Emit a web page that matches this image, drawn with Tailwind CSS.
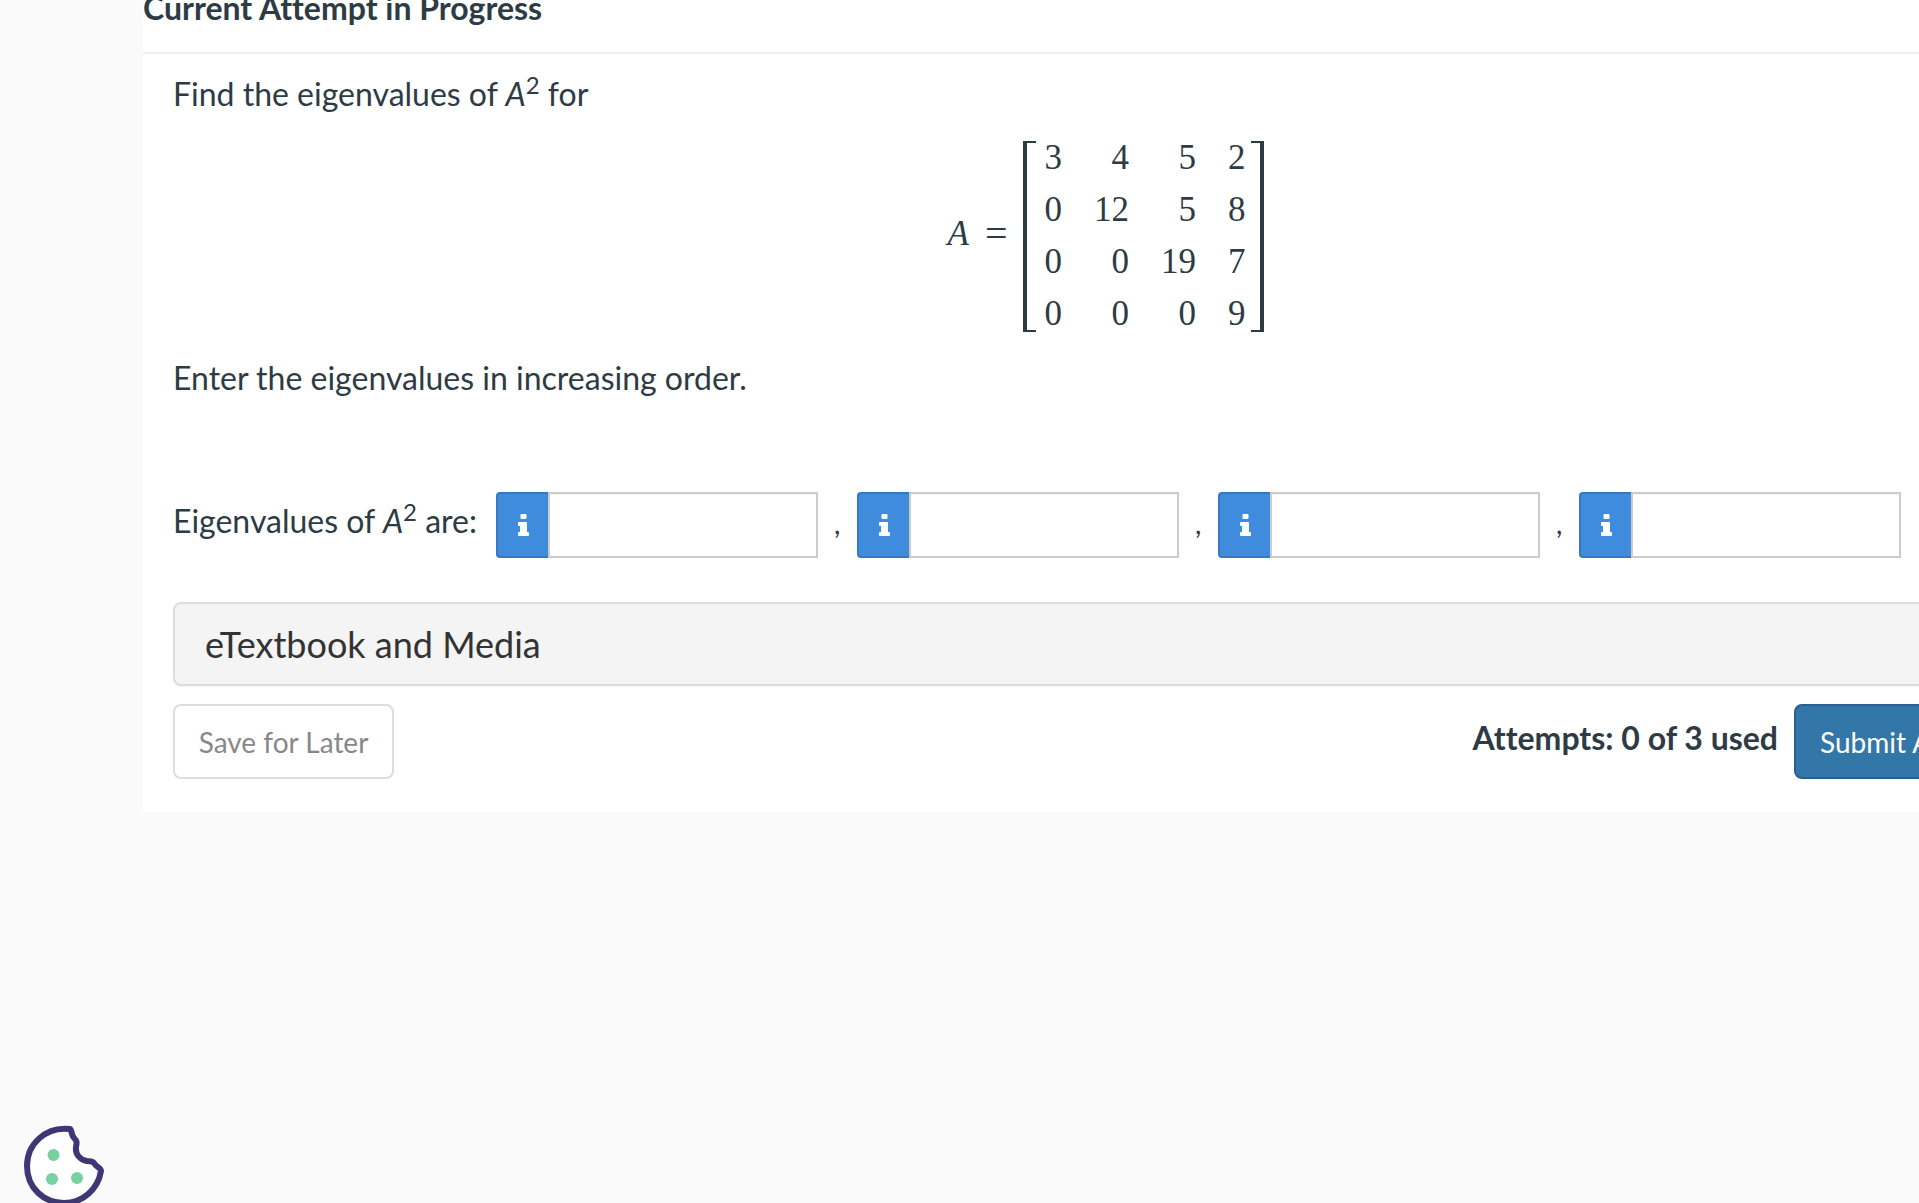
<!DOCTYPE html>
<html lang="en">
<head>
    <meta charset="UTF-8">
    <meta name="viewport" content="width=device-width, initial-scale=1.0">
    <title>Eigenvalues</title>
    <script src="https://cdn.jsdelivr.net/npm/@tailwindcss/browser@4"></script>
</head>
<body class="min-h-screen overflow-hidden bg-[#fafafa] font-['Lato',sans-serif] text-[32px] leading-10 text-[#2d3b45] [font-variant-ligatures:none]">

    <main class="ml-[143px] -mr-[150px] flow-root bg-white pb-[33px]">
        <h2 class="-mt-3 border-b-2 border-[#eeeeee] pb-6 font-bold">Current Attempt in Progress</h2>

        <form class="px-[30px] pt-5">
            <p>Find the eigenvalues of <i>A</i><sup>2</sup> for</p>

            <!-- matrix -->
            <div class="mt-[18px] flex items-center justify-center font-['Liberation_Serif',serif] text-[35px]">
                <i class="pb-1">A</i>
                <span class="ml-4 pb-1 text-[40px]">=</span>
                <div class="ml-4 h-[191px] w-[13px] border-y-2 border-l-4 border-[#2d3b45]"></div>
                <table class="ml-2 mr-1.5 text-right leading-[52px]">
                    <tr><td>3</td><td class="pl-8">4</td><td class="pl-8">5</td><td class="pl-8">2</td></tr>
                    <tr><td>0</td><td class="pl-8">12</td><td class="pl-8">5</td><td class="pl-8">8</td></tr>
                    <tr><td>0</td><td class="pl-8">0</td><td class="pl-8">19</td><td class="pl-8">7</td></tr>
                    <tr><td>0</td><td class="pl-8">0</td><td class="pl-8">0</td><td class="pl-8">9</td></tr>
                </table>
                <div class="h-[191px] w-[13px] border-y-2 border-r-4 border-[#2d3b45]"></div>
            </div>

            <p class="mt-[18px]">Enter the eigenvalues in increasing order.</p>

            <!-- answers -->
            <div class="mt-[94px] flex items-center">
                <label for="ev1" class="w-[323px] shrink-0 pb-2">Eigenvalues of <i>A</i><sup>2</sup> are:</label>
                <div class="flex h-[66px] w-[322px] shrink-0">
                    <button type="button" aria-label="Info" class="flex w-[52px] shrink-0 items-center justify-center rounded-l border-y-2 border-l-2 border-[#3379c4] bg-[#3f8bdc]">
                        <svg class="h-[22px] w-[11px]" viewBox="0 0 11 22" fill="#fff"><rect x="2.5" width="6" height="5" rx="1"/><path d="M1 8h7q1 0 1 1v9h1q1 0 1 1v2q0 1-1 1H1q-1 0-1-1v-2q0-1 1-1h1v-6H1q-1 0-1-1V9q0-1 1-1z"/></svg>
                    </button>
                    <input id="ev1" type="text" class="w-full min-w-0 border-2 border-[#cccccc] bg-white px-3 inset-shadow-xs">
                </div>
                <span class="w-[39px] shrink-0 pb-1 pl-4 text-[28px]">,</span>
                <div class="flex h-[66px] w-[322px] shrink-0">
                    <button type="button" aria-label="Info" class="flex w-[52px] shrink-0 items-center justify-center rounded-l border-y-2 border-l-2 border-[#3379c4] bg-[#3f8bdc]">
                        <svg class="h-[22px] w-[11px]" viewBox="0 0 11 22" fill="#fff"><rect x="2.5" width="6" height="5" rx="1"/><path d="M1 8h7q1 0 1 1v9h1q1 0 1 1v2q0 1-1 1H1q-1 0-1-1v-2q0-1 1-1h1v-6H1q-1 0-1-1V9q0-1 1-1z"/></svg>
                    </button>
                    <input id="ev2" aria-label="Second eigenvalue" type="text" class="w-full min-w-0 border-2 border-[#cccccc] bg-white px-3 inset-shadow-xs">
                </div>
                <span class="w-[39px] shrink-0 pb-1 pl-4 text-[28px]">,</span>
                <div class="flex h-[66px] w-[322px] shrink-0">
                    <button type="button" aria-label="Info" class="flex w-[52px] shrink-0 items-center justify-center rounded-l border-y-2 border-l-2 border-[#3379c4] bg-[#3f8bdc]">
                        <svg class="h-[22px] w-[11px]" viewBox="0 0 11 22" fill="#fff"><rect x="2.5" width="6" height="5" rx="1"/><path d="M1 8h7q1 0 1 1v9h1q1 0 1 1v2q0 1-1 1H1q-1 0-1-1v-2q0-1 1-1h1v-6H1q-1 0-1-1V9q0-1 1-1z"/></svg>
                    </button>
                    <input id="ev3" aria-label="Third eigenvalue" type="text" class="w-full min-w-0 border-2 border-[#cccccc] bg-white px-3 inset-shadow-xs">
                </div>
                <span class="w-[39px] shrink-0 pb-1 pl-4 text-[28px]">,</span>
                <div class="flex h-[66px] w-[322px] shrink-0">
                    <button type="button" aria-label="Info" class="flex w-[52px] shrink-0 items-center justify-center rounded-l border-y-2 border-l-2 border-[#3379c4] bg-[#3f8bdc]">
                        <svg class="h-[22px] w-[11px]" viewBox="0 0 11 22" fill="#fff"><rect x="2.5" width="6" height="5" rx="1"/><path d="M1 8h7q1 0 1 1v9h1q1 0 1 1v2q0 1-1 1H1q-1 0-1-1v-2q0-1 1-1h1v-6H1q-1 0-1-1V9q0-1 1-1z"/></svg>
                    </button>
                    <input id="ev4" aria-label="Fourth eigenvalue" type="text" class="w-full min-w-0 border-2 border-[#cccccc] bg-white px-3 inset-shadow-xs">
                </div>
            </div>

            <button type="button" class="mt-11 block h-[84px] w-full rounded-lg border-2 border-[#dddddd] bg-[#f4f4f4] px-[30px] text-left text-4xl text-[#333333] shadow-xs">eTextbook and Media</button>

            <div class="mt-[18px] flex items-center">
                <button type="button" class="h-[75px] w-[221px] rounded-lg border-2 border-[#dddddd] bg-white text-[28px] text-[#888888]">Save for Later</button>
                <p class="ml-auto pb-2 font-bold">Attempts: 0 of 3 used</p>
                <button type="submit" class="ml-4 h-[75px] w-[245px] rounded-lg border-2 border-[#286090] bg-[#3377a9] px-6 text-left text-[28px] text-white">Submit Answer</button>
            </div>
        </form>
    </main>

    <!-- cookie settings -->
    <button type="button" aria-label="Cookie settings" class="fixed bottom-0 left-6 h-[78px] w-20 overflow-hidden">
        <svg class="h-[78px] w-20" viewBox="24 1125 80 78" fill="none">
            <path d="M70 1129C46 1126 27 1144 27 1166C27 1188 44 1203 64 1203C83 1203 98 1189 101 1171C101 1168 96 1167 94 1163C92 1161 89 1161 87 1161C80 1160 75 1154 76 1147C77 1142 77 1141 74 1138C71 1135 72 1130 70 1129Z" fill="#fff" stroke="#3d3775" stroke-width="6" stroke-linejoin="round"/>
            <g fill="#78d19f"><circle cx="53.500" cy="1155" r="6"/><circle cx="52" cy="1179" r="6"/><circle cx="77" cy="1178" r="6"/></g>
        </svg>
    </button>
</body>
</html>
